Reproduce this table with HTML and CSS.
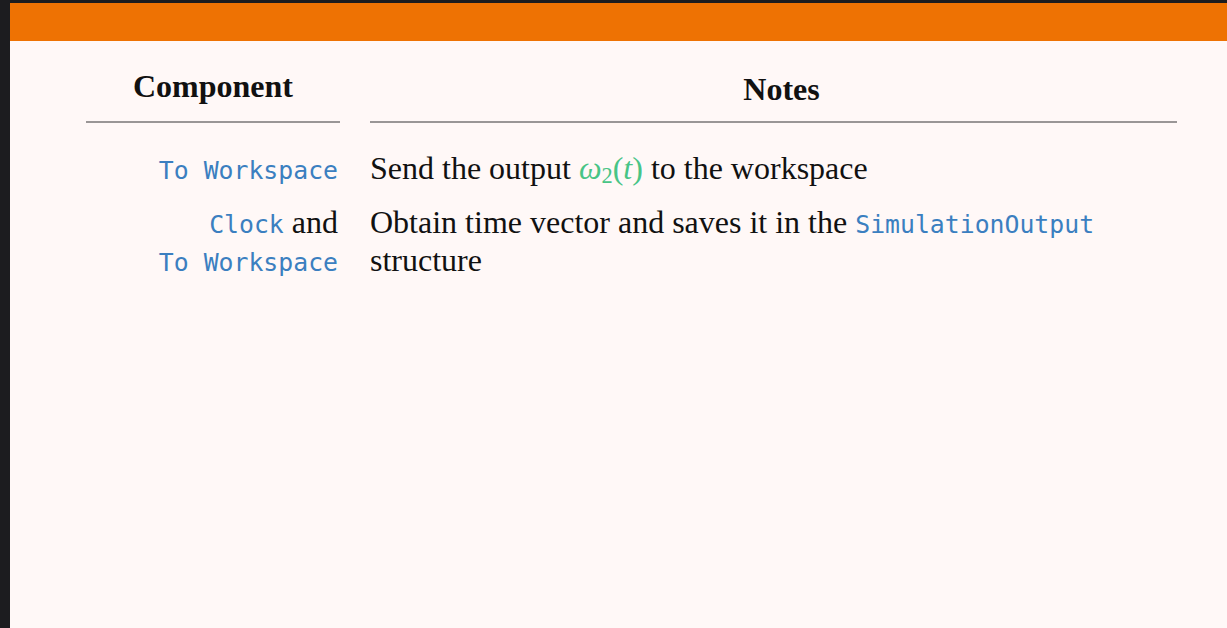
FILE: index.html
```html
<!DOCTYPE html>
<html>
<head>
<meta charset="utf-8">
<link rel="stylesheet" href="styles.css">
</head>
<body>
<div class="frame">
  <div class="bar"></div>
  <div class="slide">
    <div class="table">
      <div class="th c1">Component</div>
      <div class="th c2 notes-h">Notes</div>
      <div class="td c1 r1"><code>To Workspace</code></div>
      <div class="td c2 r1">Send the output <span class="math"><i>ω</i><sub>2</sub>(<i>t</i>)</span> to the workspace</div>
      <div class="td c1 r2"><code>Clock</code> and<br><code>To Workspace</code></div>
      <div class="td c2 r2">Obtain time vector and saves it in the <code>SimulationOutput</code><br>structure</div>
    </div>
  </div>
</div>
</body>
</html>
```
FILE: styles.css
```css
html, body {
  margin: 0;
  padding: 0;
  height: 100%;
  background: #1c1c1f;
}
.frame {
  height: 100%;
  box-sizing: border-box;
  padding-top: 3px;
  padding-left: 10px;
  display: flex;
  flex-direction: column;
}
.bar {
  height: 38px;
  background: #ee7203;
  flex: none;
}
.slide {
  flex: 1;
  background: #fff8f7;
  padding-left: 76px;
}
.table {
  display: grid;
  grid-template-columns: 254px 807px;
  column-gap: 30px;
  font-family: "Liberation Serif", serif;
  font-size: 32px;
  line-height: 38px;
  color: #111;
}
.th {
  font-weight: bold;
  padding-top: 26px;
  padding-bottom: 16px;
  border-bottom: 2px solid #9a9696;
}
.th.c1, .th.c2 { text-align: center; }
.notes-h {
  padding-top: 29px;
  padding-bottom: 13px;
  padding-left: 16px;
}
.td.c1 { text-align: right; padding-right: 2px; }
.td.c2 { text-align: left; }
.r1 { padding-top: 26px; }
.r2 { padding-top: 16px; }
code {
  font-family: "DejaVu Sans Mono", monospace;
  font-size: 24.8px;
  line-height: 20px;
  color: #3b7fc0;
}
.math {
  color: #48c486;
}
.math sub {
  font-size: 0.7em;
  vertical-align: -0.2em;
  line-height: 0;
}
```
